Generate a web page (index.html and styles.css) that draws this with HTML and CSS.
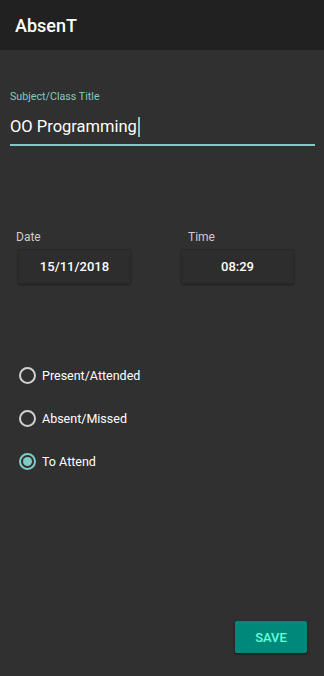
FILE: index.html
```html
<!DOCTYPE html>
<html lang="en">
<head>
    <meta charset="UTF-8">
    <meta name="viewport" content="width=device-width, initial-scale=1.0">
    <title>AbsenT</title>
    <link rel="stylesheet" href="styles.css">
</head>
<body>
    <div class="app">
        <header class="toolbar">
            <h1>AbsenT</h1>
        </header>
        <main class="content">
            <div class="field">
                <label class="field-label">Subject/Class Title</label>
                <div class="field-input">OO Programming<span class="caret"></span></div>
            </div>

            <div class="pickers">
                <div class="picker">
                    <span class="picker-label">Date</span>
                    <div class="picker-box">15/11/2018</div>
                </div>
                <div class="picker picker-time">
                    <span class="picker-label">Time</span>
                    <div class="picker-box">08:29</div>
                </div>
            </div>

            <div class="radios">
                <label class="radio"><span class="dot"></span>Present/Attended</label>
                <label class="radio"><span class="dot"></span>Absent/Missed</label>
                <label class="radio checked"><span class="dot"></span>To Attend</label>
            </div>

            <div class="actions">
                <button class="save">SAVE</button>
            </div>
        </main>
    </div>
</body>
</html>
```

FILE: styles.css
```css
* {
    margin: 0;
    padding: 0;
    box-sizing: border-box;
}

body {
    font-family: Roboto, 'Noto Sans', sans-serif;
    background: #303030;
    color: #fff;
    width: 324px;
    height: 676px;
    overflow: hidden;
}

.app {
    display: flex;
    flex-direction: column;
    height: 676px;
}

.toolbar {
    height: 50px;
    background: #212121;
    display: flex;
    align-items: center;
    padding-left: 15px;
}

.toolbar h1 {
    font-size: 18px;
    font-weight: 500;
    color: #fff;
}

.content {
    flex: 1;
    display: flex;
    flex-direction: column;
    padding: 0 9px 23px 10px;
}

.field {
    margin-top: 41px;
}

.field-label {
    display: block;
    font-size: 10.7px;
    color: #80cbc4;
    line-height: 12px;
}

.field-input {
    margin-top: 13px;
    font-size: 16.5px;
    line-height: 22px;
    padding-bottom: 6px;
    border-bottom: 2px solid #80cbc4;
    display: flex;
    align-items: center;
}

.caret {
    display: inline-block;
    width: 2px;
    height: 20px;
    background: #80cbc4;
    margin-left: 1px;
}

.pickers {
    display: flex;
    margin-top: 84px;
    padding-left: 6px;
}

.picker {
    display: flex;
    flex-direction: column;
}

.picker-time {
    margin-left: 57px;
}

.picker-label {
    font-size: 12px;
    color: #ccc;
    line-height: 14px;
    height: 14px;
}

.picker-box {
    margin-top: 5px;
    margin-left: 2px;
    width: 113px;
    height: 35px;
    background: #2d2d2d;
    border: 1px solid #282828;
    box-shadow: 0 1px 2px rgba(0, 0, 0, 0.35);
    border-radius: 2px;
    display: flex;
    align-items: center;
    justify-content: center;
    font-size: 13px;
    font-weight: 500;
    color: #fff;
}

.picker-time .picker-box {
    margin-left: -7px;
}

.radios {
    display: flex;
    flex-direction: column;
    gap: 26px;
    margin-top: 83px;
    padding-left: 9px;
}

.radio {
    display: flex;
    align-items: center;
    font-size: 12.5px;
    line-height: 17px;
    color: #fff;
}

.dot {
    width: 17px;
    height: 17px;
    border: 2px solid #d0d0d0;
    border-radius: 50%;
    margin-right: 6px;
    display: flex;
    align-items: center;
    justify-content: center;
}

.checked .dot {
    border-color: #80cbc4;
}

.checked .dot::after {
    content: "";
    width: 9px;
    height: 9px;
    border-radius: 50%;
    background: #80cbc4;
}

.actions {
    margin-top: auto;
    display: flex;
    justify-content: flex-end;
    padding-right: 8px;
}

.save {
    width: 72px;
    height: 32px;
    background: #00897b;
    border: none;
    border-radius: 2px;
    box-shadow: 0 1px 3px rgba(0, 0, 0, 0.5);
    color: #64ffda;
    font-family: Roboto, sans-serif;
    font-size: 13px;
    font-weight: 500;
}
```
